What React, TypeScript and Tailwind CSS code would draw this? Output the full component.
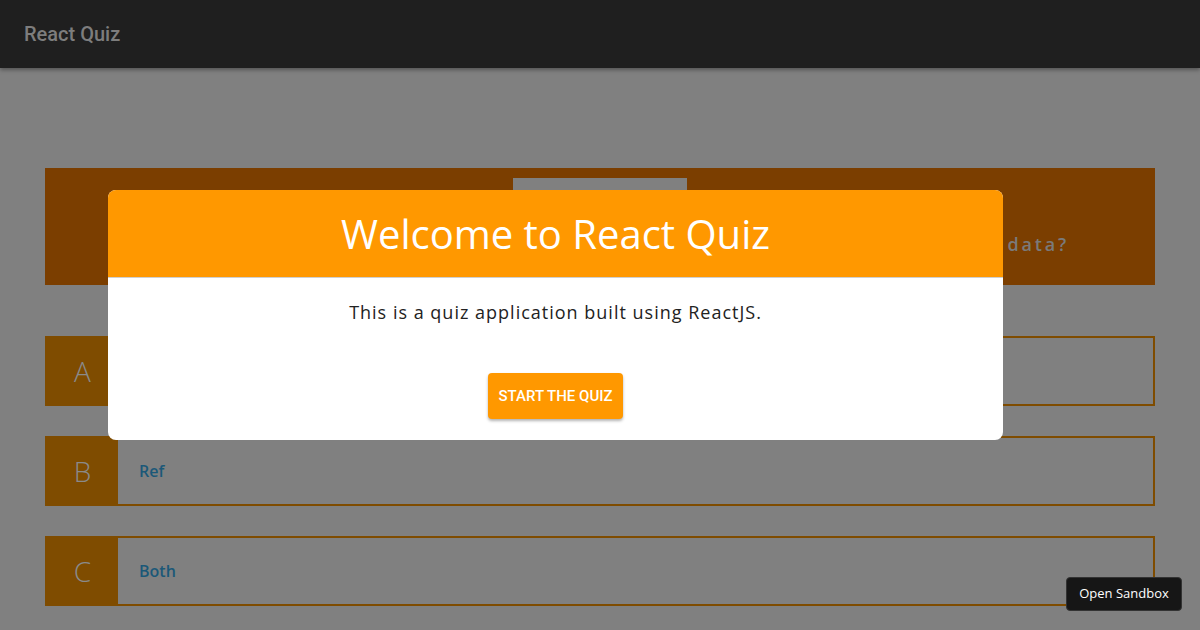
import React from "react"

const answers = [
  { letter: "A", text: "" },
  { letter: "B", text: "Ref" },
  { letter: "C", text: "Both" },
]

function AnswerRow({ letter, text }: { letter: string; text: string }) {
  return (
    <div className="flex h-[70px] border-2 border-[#7f4c00]">
      <div className="-my-[2px] -ml-[2px] flex w-[73px] items-center justify-center bg-[#7f4c00] pl-[2px] text-[28px] font-light text-[#8a8a8a]">
        {letter}
      </div>
      <div className="flex items-center pl-[21px] text-[16px] font-semibold text-[#1b5878]">{text}</div>
    </div>
  )
}

export default function App() {
  return (
    <div
      className="relative h-[630px] w-full overflow-hidden bg-[#808080]"
      style={{ fontFamily: '"Open Sans", "Liberation Sans", sans-serif' }}
    >
      <header
        className="relative z-10 flex h-[68px] items-center bg-[#1f1f1f] px-6 shadow-[0_2px_4px_rgba(0,0,0,0.35)]"
        style={{ fontFamily: "Roboto, sans-serif" }}
      >
        <span className="text-[20px] font-medium text-[#7d7d7d]">React Quiz</span>
      </header>

      <main className="px-[45px] pt-[100px]">
        <div className="relative h-[117px] bg-[#7b3e00]">
          <div className="absolute left-[468px] top-[10px] h-[40px] w-[174px] bg-[#808080]" />
          <div className="flex h-full items-end justify-end pb-[27px] pr-[86px] text-[18px] font-semibold tracking-[2.8px] text-[#7a7a7a]">
            Which hook is used to hold and persist data?
          </div>
        </div>

        <div className="mt-[51px] flex flex-col gap-[30px]">
          {answers.map((a) => (
            <AnswerRow key={a.letter} letter={a.letter} text={a.text} />
          ))}
        </div>
      </main>

      <div className="absolute left-[108px] top-[190px] flex h-[250px] w-[895px] flex-col overflow-hidden rounded-lg bg-white">
        <div className="flex h-[88px] items-center justify-center border-b border-[#cfcfcf] bg-[#ff9800]">
          <h1 className="text-[40px] font-normal leading-none text-white">Welcome to React Quiz</h1>
        </div>
        <p className="mt-[21px] text-center text-[18px] tracking-[1px] text-[#222]">
          This is a quiz application built using ReactJS.
        </p>
        <div className="mt-[47px] flex justify-center">
          <button
            className="h-[46px] w-[135px] rounded bg-[#ff9800] text-[15px] font-medium text-white shadow-[0_2px_3px_rgba(0,0,0,0.3)]"
            style={{ fontFamily: "Roboto, sans-serif" }}
          >
            START THE QUIZ
          </button>
        </div>
      </div>

      <button className="absolute bottom-[19px] right-[18px] h-[34px] w-[116px] rounded border border-[#333] bg-[#161616] text-[13px] text-white">
        Open Sandbox
      </button>
    </div>
  )
}
